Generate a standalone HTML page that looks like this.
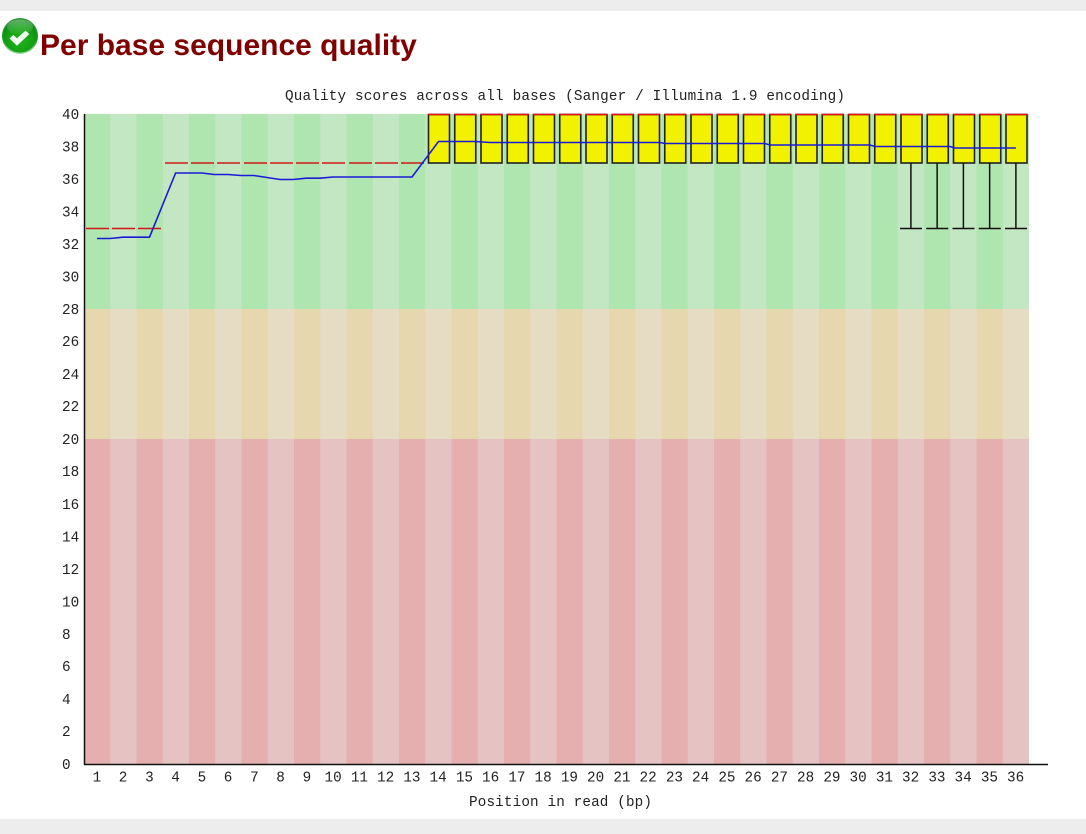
<!DOCTYPE html>
<html><head><meta charset="utf-8"><title>Per base sequence quality</title>
<style>
html,body{margin:0;padding:0;width:1086px;height:834px;overflow:hidden;background:#ededed}
#w{position:absolute;left:0;top:11px;width:1086px;height:808px;background:#fff}
h2{position:absolute;left:40px;top:29px;margin:0;font:bold 30px/34px "Liberation Sans",Arial,sans-serif;color:#800000;white-space:nowrap}
svg{position:absolute;left:0;top:0}
text{font-family:"Liberation Mono",monospace;font-size:14.3px;fill:#222}
.c{filter:blur(.35px)}
</style></head><body>
<div id="w"></div>
<svg width="1086" height="834" viewBox="0 0 1086 834">
<defs>
<radialGradient id="g" cx="50%" cy="62%" r="55%"><stop offset="0" stop-color="#22b31a"/><stop offset=".72" stop-color="#12a012"/><stop offset="1" stop-color="#0c8a14"/></radialGradient>
<linearGradient id="s" x1="0" y1="0" x2="0" y2="1"><stop offset="0" stop-color="#fff" stop-opacity=".35"/><stop offset="1" stop-color="#fff" stop-opacity=".03"/></linearGradient>
<linearGradient id="r" x1="0" y1="0" x2="0" y2="1"><stop offset="0" stop-color="#2f8f3a"/><stop offset=".6" stop-color="#1d9a25"/><stop offset="1" stop-color="#a8dca8"/></linearGradient>
<clipPath id="dk"><path d="M84 0h26.25v834h-26.25zM136.5 0h26.25v834h-26.25zM189 0h26.25v834h-26.25zM241.5 0h26.25v834h-26.25zM294 0h26.25v834h-26.25zM346.5 0h26.25v834h-26.25zM399 0h26.25v834h-26.25zM451.5 0h26.25v834h-26.25zM504 0h26.25v834h-26.25zM556.5 0h26.25v834h-26.25zM609 0h26.25v834h-26.25zM661.5 0h26.25v834h-26.25zM714 0h26.25v834h-26.25zM766.5 0h26.25v834h-26.25zM819 0h26.25v834h-26.25zM871.5 0h26.25v834h-26.25zM924 0h26.25v834h-26.25zM976.5 0h26.25v834h-26.25z"/></clipPath>
<g id="b"><rect x="428.5" y="114.5" width="21" height="48.5" fill="#f2f200" stroke="#222" stroke-width="1.6"/><path d="M428 114.5h22" stroke="#e8101a" stroke-width="1.4"/></g>
<g id="wh"><path d="M910.9 163V228.5M900 228.5h22" stroke="#111" stroke-width="1.5" fill="none"/></g>
</defs>
<g class="c">
<circle cx="20" cy="36" r="17.3" fill="url(#g)" stroke="url(#r)" stroke-width="1.4"/>
<ellipse cx="20" cy="27" rx="13" ry="7.5" fill="url(#s)"/>
<path d="M9.5 38.5l3.8-3.6 3.7 3.5 8.5-7.8 3.8 3.4-12.3 11.8z" fill="#fff" opacity=".95"/>
</g>

<rect x="84" y="114" width="945" height="195" fill="#c3e6c3"/>
<rect x="84" y="114" width="945" height="195" fill="#afe6af" clip-path="url(#dk)"/>
<rect x="84" y="309" width="945" height="130" fill="#e6dcc3"/>
<rect x="84" y="309" width="945" height="130" fill="#e6d7af" clip-path="url(#dk)"/>
<rect x="84" y="439" width="945" height="325" fill="#e6c3c3"/>
<rect x="84" y="439" width="945" height="325" fill="#e6afaf" clip-path="url(#dk)"/>

<g class="c">
<path d="M84.5 114V764.5H1048" fill="none" stroke="#111" stroke-width="1.5"/>

<path d="M86 228.5h23M112 228.5h23M138 228.5h23M165 163h23M191 163h23M217 163h23M244 163h23M270 163h23M296 163h23M322 163h23M349 163h23M375 163h23M401 163h23" stroke="#d01818" stroke-width="1.4" fill="none"/>

<use href="#b"/>
<use href="#b" x="26.25"/><use href="#b" x="52.5"/><use href="#b" x="78.75"/><use href="#b" x="105"/><use href="#b" x="131.25"/><use href="#b" x="157.5"/><use href="#b" x="183.75"/><use href="#b" x="210"/><use href="#b" x="236.25"/><use href="#b" x="262.5"/><use href="#b" x="288.75"/><use href="#b" x="315"/><use href="#b" x="341.25"/><use href="#b" x="367.5"/><use href="#b" x="393.75"/><use href="#b" x="420"/><use href="#b" x="446.25"/><use href="#b" x="472.5"/><use href="#b" x="498.75"/><use href="#b" x="525"/><use href="#b" x="551.25"/><use href="#b" x="577.5"/>

<use href="#wh"/><use href="#wh" x="26.25"/><use href="#wh" x="52.5"/><use href="#wh" x="78.75"/><use href="#wh" x="105"/>

<path d="M96.9 238.5H110L123 237.2H149.5L175.6 173H201.9L214 174.5H228L241 175.5H254L267 177.5L280 179.5H293L306 178.2H320L333 177H412L438.5 141.5H475L490 142.5H660L665 143.5H765L770 145H870L875 146.5H950L955 148H1015.9" fill="none" stroke="#1a1ad8" stroke-width="1.6"/>

<g transform="translate(0,-1)">
<text x="565" y="101" text-anchor="middle" textLength="560">Quality scores across all bases (Sanger / Illumina 1.9 encoding)</text>
<text x="560.5" y="807" text-anchor="middle" textLength="183">Position in read (bp)</text>

<g>
<text x="62" y="120">40</text><text x="62" y="152.5">38</text><text x="62" y="185">36</text><text x="62" y="217.5">34</text><text x="62" y="250">32</text><text x="62" y="282.5">30</text><text x="62" y="315">28</text><text x="62" y="347">26</text><text x="62" y="380">24</text><text x="62" y="412">22</text><text x="62" y="445">20</text><text x="62" y="477">18</text><text x="62" y="510">16</text><text x="62" y="542.5">14</text><text x="62" y="575">12</text><text x="62" y="607.5">10</text>
<text x="62" y="640">8</text><text x="62" y="672">6</text><text x="62" y="705">4</text><text x="62" y="737">2</text><text x="62" y="770">0</text>
</g>
<g>
<text x="96.9" y="782.5" text-anchor="middle">1</text><text x="123.1" y="782.5" text-anchor="middle">2</text><text x="149.4" y="782.5" text-anchor="middle">3</text><text x="175.6" y="782.5" text-anchor="middle">4</text><text x="201.9" y="782.5" text-anchor="middle">5</text><text x="228.1" y="782.5" text-anchor="middle">6</text><text x="254.4" y="782.5" text-anchor="middle">7</text><text x="280.6" y="782.5" text-anchor="middle">8</text><text x="306.9" y="782.5" text-anchor="middle">9</text>
<text x="333.1" y="782.5" text-anchor="middle">10</text><text x="359.4" y="782.5" text-anchor="middle">11</text><text x="385.6" y="782.5" text-anchor="middle">12</text><text x="411.9" y="782.5" text-anchor="middle">13</text><text x="438.1" y="782.5" text-anchor="middle">14</text><text x="464.4" y="782.5" text-anchor="middle">15</text><text x="490.6" y="782.5" text-anchor="middle">16</text><text x="516.9" y="782.5" text-anchor="middle">17</text><text x="543.1" y="782.5" text-anchor="middle">18</text><text x="569.4" y="782.5" text-anchor="middle">19</text><text x="595.6" y="782.5" text-anchor="middle">20</text><text x="621.9" y="782.5" text-anchor="middle">21</text><text x="648.1" y="782.5" text-anchor="middle">22</text><text x="674.4" y="782.5" text-anchor="middle">23</text><text x="700.6" y="782.5" text-anchor="middle">24</text><text x="726.9" y="782.5" text-anchor="middle">25</text><text x="753.1" y="782.5" text-anchor="middle">26</text><text x="779.4" y="782.5" text-anchor="middle">27</text><text x="805.6" y="782.5" text-anchor="middle">28</text><text x="831.9" y="782.5" text-anchor="middle">29</text><text x="858.1" y="782.5" text-anchor="middle">30</text><text x="884.4" y="782.5" text-anchor="middle">31</text><text x="910.6" y="782.5" text-anchor="middle">32</text><text x="936.9" y="782.5" text-anchor="middle">33</text><text x="963.1" y="782.5" text-anchor="middle">34</text><text x="989.4" y="782.5" text-anchor="middle">35</text><text x="1015.6" y="782.5" text-anchor="middle">36</text>
</g>
</g>
</g>
</svg>
<h2>Per base sequence quality</h2>
</body></html>
